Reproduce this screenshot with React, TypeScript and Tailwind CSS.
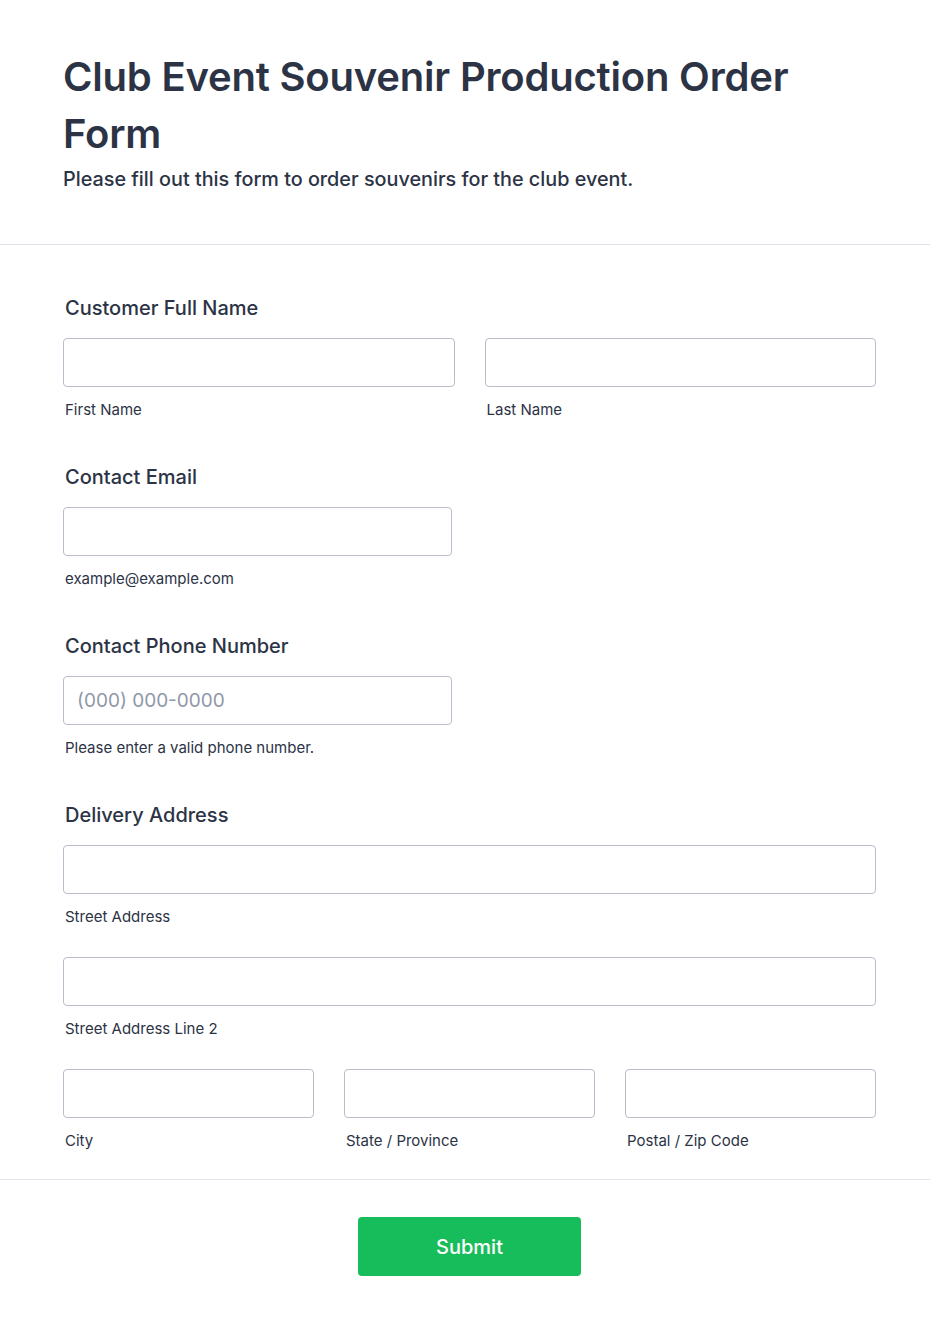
import React from "react";

type FieldProps = {
  sub: string;
  placeholder?: string;
  className?: string;
};

function Field({ sub, placeholder, className = "" }: FieldProps) {
  return (
    <div className={`flex flex-col ${className}`}>
      <input
        type="text"
        placeholder={placeholder}
        className="h-[49px] w-full rounded-[4px] border border-[#b8bdc9] bg-white px-[13px] text-[19px] text-[#2c3345] placeholder:text-[#8f97a8] outline-none"
      />
      <span className="mt-[13px] pl-[2px] text-[15px] leading-[20px] text-[#2c3345]">{sub}</span>
    </div>
  );
}

function Label({ children }: { children: React.ReactNode }) {
  return (
    <h2 className="pl-[2px] text-[20px] font-medium leading-[30px] text-[#2c3345]">{children}</h2>
  );
}

export default function App() {
  return (
    <div className="min-h-[1326px] bg-white" style={{ fontFamily: "Inter, 'Noto Sans', sans-serif" }}>
      <header className="px-[63px] pb-[51px] pt-[48px]">
        <h1 className="text-[40px] font-semibold leading-[57px] tracking-[-0.2px] text-[#2c3345]">
          Club Event Souvenir Production Order Form
        </h1>
        <p className="mt-[4px] text-[19.8px] font-medium leading-[27px] text-[#2c3345]">
          Please fill out this form to order souvenirs for the club event.
        </p>
      </header>

      <div className="border-t border-[#dfe1e8]" />

      <main className="w-[813px] px-[63px] pt-[48px] pb-[28px] box-content">
        <section>
          <Label>Customer Full Name</Label>
          <div className="mt-[15px] grid grid-cols-2 gap-[30px]">
            <Field sub="First Name" />
            <Field sub="Last Name" />
          </div>
        </section>

        <section className="mt-[42px]">
          <Label>Contact Email</Label>
          <div className="mt-[15px] w-[389px]">
            <Field sub="example@example.com" />
          </div>
        </section>

        <section className="mt-[42px]">
          <Label>Contact Phone Number</Label>
          <div className="mt-[15px] w-[389px]">
            <Field sub="Please enter a valid phone number." placeholder="(000) 000-0000" />
          </div>
        </section>

        <section className="mt-[42px]">
          <Label>Delivery Address</Label>
          <div className="mt-[15px] flex flex-col gap-[30px]">
            <Field sub="Street Address" />
            <Field sub="Street Address Line 2" />
            <div className="grid grid-cols-3 gap-[30px]">
              <Field sub="City" />
              <Field sub="State / Province" />
              <Field sub="Postal / Zip Code" />
            </div>
          </div>
        </section>
      </main>

      <div className="border-t border-[#e3e5ec]" />

      <div className="w-[813px] px-[63px] pt-[37px] box-content flex justify-center">
        <button
          type="button"
          className="h-[59px] w-[223px] rounded-[4px] bg-[#18bd5b] text-[20px] font-medium text-white"
        >
          Submit
        </button>
      </div>
    </div>
  );
}
